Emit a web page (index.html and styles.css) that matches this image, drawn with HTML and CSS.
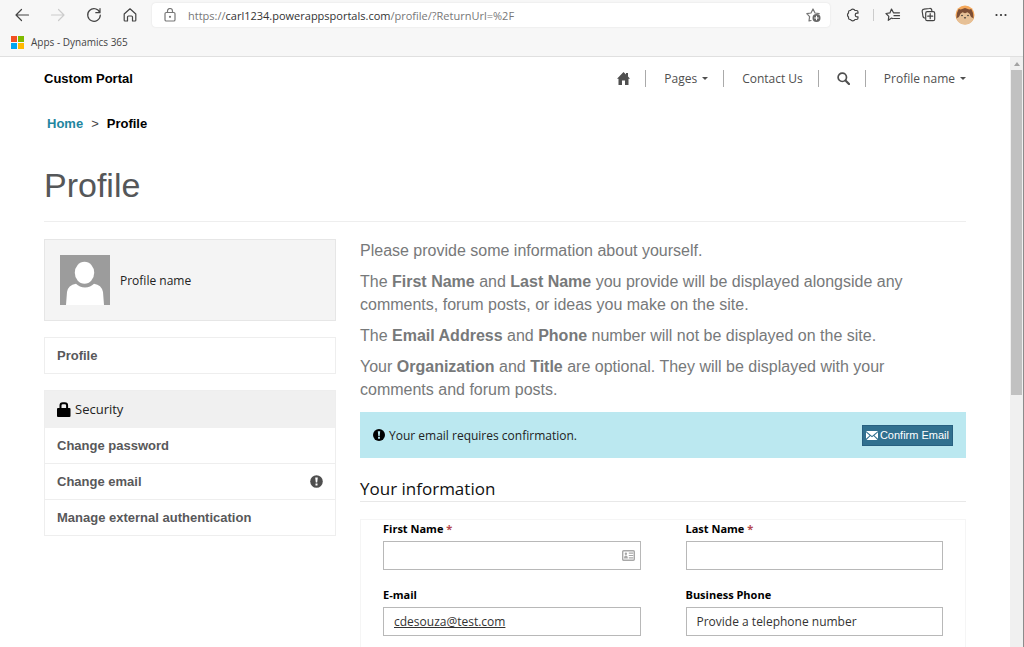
FILE: index.html
```html
<!DOCTYPE html>
<html lang="en">
<head>
<meta charset="utf-8">
<title>Profile - Custom Portal</title>
<link rel="stylesheet" href="styles.css">
</head>
<body>
<header class="browser">
  <div class="toolbar">
    <div class="nav-buttons">
      <button class="tool" aria-label="Back"><svg width="16" height="16" viewBox="0 0 16 16" class="line dark"><path d="M14.500 8H2M7.500 2.500 2 8l5.500 5.500"/></svg></button>
      <button class="tool" aria-label="Forward" disabled><svg width="16" height="16" viewBox="0 0 16 16" class="line faint"><path d="M1.500 8H14M8.500 2.500 14 8l-5.500 5.500"/></svg></button>
      <button class="tool" aria-label="Refresh"><svg width="16" height="16" viewBox="0 0 16 16" class="line dark"><path d="M13.800 5.500A6.300 6.300 0 1 0 14.300 8M14 1.500v4.200H9.800"/></svg></button>
      <button class="tool" aria-label="Home page"><svg width="16" height="16" viewBox="0 0 16 16" class="line dark"><path d="M2.200 7 8 1.800 13.800 7v6.200q0 .8-.8.8H10.500v-4q0-1-1-1h-3q-1 0-1 1v4H3q-.8 0-.8-.8z"/></svg></button>
    </div>
    <div class="address">
      <svg width="12" height="14" viewBox="0 0 12 14" class="line gray"><rect x="1" y="4.500" width="10" height="8.500" rx="1.300"/><path d="M3.500 4.500V3a2.500 2.500 0 0 1 5 0v1.500"/><circle cx="6" cy="8.800" r=".5"/></svg>
      <span class="url"><span class="muted">https://</span>carl1234.powerappsportals.com<span class="muted">/profile/?ReturnUrl=%2F</span></span>
      <button class="tool small" aria-label="Add to favorites"><svg width="16" height="16" viewBox="0 0 16 16"><path class="line gray" d="M5 13.500 3 14l.6-4.300L.8 6.600 5 6l2-4 2 4 4.200.6"/><circle cx="10.500" cy="11" r="4" fill="#666"/><path d="M10.500 8.800v4.400M8.300 11h4.400" stroke="#fff"/></svg></button>
    </div>
    <div class="extras">
      <button class="tool narrow" aria-label="Extensions"><svg width="14" height="14" viewBox="0 0 14 14" class="line dark"><path d="M4.500 2.500a2.500 2.500 0 0 1 4.500 0h1.500q1.500 0 1.500 1.500v1.200H11a1.800 1.800 0 0 0 0 3.600h1V10q0 1.500-1.500 1.500H9a2.500 2.500 0 0 1-4.500 0H4Q2.500 11.500 2.500 10V9a2.500 2.500 0 0 1 0-4V4Q2.500 2.500 4 2.500z"/></svg></button>
      <span class="rule"></span>
      <button class="tool" aria-label="Favorites"><svg width="16" height="16" viewBox="0 0 16 16" class="line dark"><path d="M7.500 11.500 6.600 11 3.300 13.300l.5-4L1 6.500l3.900-.6L6.500 2l2 3.800h6M9 8.700h5.500M8.500 11.500h6"/></svg></button>
      <button class="tool" aria-label="Collections"><svg width="16" height="16" viewBox="0 0 16 16" class="line dark"><path d="M3.500 11A2 2 0 0 1 2 9.500L1.200 4.500A2 2 0 0 1 3 2.200l5.500-.7A2 2 0 0 1 10.800 3v1"/><rect x="4.700" y="4.700" width="9" height="9" rx="1.500"/><path d="M9.200 6.700v5M6.700 9.200h5"/></svg></button>
      <button class="tool" aria-label="Account"><svg width="20" height="20" viewBox="0 0 20 20"><circle cx="10" cy="10" r="9.500" fill="#f5a95c"/><path d="M1.500 13 2 8l1.700-4 2 .5L10 3l4.300 1.500 2-.5L18 8l.5 5-2 3h-13z" fill="#7d4f36"/><path d="M1.500 13q2.800 0 3.700-4L7.500 7.200 10 8.200l2.500-1L14.800 9q.9 4 3.700 4-1.500 6.500-8.500 6.500T1.500 13z" fill="#e6c096"/><circle cx="7" cy="10.500" r=".8" fill="#333"/><circle cx="13" cy="10.500" r=".8" fill="#333"/><path d="M8.800 12.300h2.400L10 14z" fill="#333"/></svg></button>
      <button class="tool" aria-label="Settings and more"><svg width="14" height="4" viewBox="0 0 14 4" fill="#333"><circle cx="2.500" cy="2" r="1.100"/><circle cx="7" cy="2" r="1.100"/><circle cx="11.500" cy="2" r="1.100"/></svg></button>
    </div>
  </div>
  <div class="bookmarks">
    <a href="#" class="bookmark"><svg width="13" height="13" viewBox="0 0 13 13"><path fill="#f25022" d="M0 0h6v6H0z"/><path fill="#7fba00" d="M7 0h6v6H7z"/><path fill="#00a4ef" d="M0 7h6v6H0z"/><path fill="#ffb900" d="M7 7h6v6H7z"/></svg>Apps - Dynamics 365</a>
  </div>
</header>
<div class="window">
  <div class="page">
    <div class="site-header">
      <a href="#" class="brand">Custom Portal</a>
      <nav class="site-nav">
        <a href="#" aria-label="Home"><svg width="13" height="13" viewBox="0 0 13 13" fill="#4f4f4f"><path d="M6.500 0 9 2.500V1h2v3.500L13 6.800H11.500V13H8V8.500H5V13H1.500V6.800H0z"/></svg></a>
        <a href="#">Pages <i class="caret"></i></a>
        <a href="#">Contact Us</a>
        <a href="#" aria-label="Search"><svg width="13" height="13" viewBox="0 0 13 13" fill="none" stroke="#4f4f4f"><circle cx="5.300" cy="5.300" r="4.200" stroke-width="1.700"/><path d="m8.500 8.500 3.500 3.500" stroke-width="2.200" stroke-linecap="round"/></svg></a>
        <a href="#">Profile name <i class="caret"></i></a>
      </nav>
    </div>
    <nav class="crumbs"><a href="#">Home</a><span class="sep">&gt;</span><b>Profile</b></nav>
    <h1>Profile</h1>
    <div class="columns">
      <aside class="sidebar">
        <div class="card">
          <svg width="50" height="50" viewBox="0 0 50 50"><path fill="#9c9c9c" d="M0 0h50v50H0z"/><ellipse cx="24.500" cy="17.700" rx="9.700" ry="11" fill="#fff"/><path fill="#fff" d="M6 50 7 37q1-7 9-8.300 3.500 3.700 9 3.700t9-3.700q7.500 1 9 8.300l1 13z"/></svg>
          <span>Profile name</span>
        </div>
        <div class="list"><a href="#" class="item">Profile</a></div>
        <div class="list">
          <h2 class="list-title"><svg width="14" height="15" viewBox="0 0 14 15"><rect y="6" width="13.500" height="9" rx="1"/><path d="M3.500 7V3.500q0-2.300 2.300-2.300h2q2.300 0 2.300 2.300V7" fill="none" stroke="#000" stroke-width="2"/></svg>Security</h2>
          <a href="#" class="item">Change password</a>
          <a href="#" class="item">Change email<svg width="13" height="13" viewBox="0 0 13 13"><circle cx="6.500" cy="6.500" r="6.300" fill="#4f4f4f"/><path d="M5.200 2.500h2.600l-.6 5H5.800zM5.500 8.500h2v2h-2z" fill="#fff"/></svg></a>
          <a href="#" class="item">Manage external authentication</a>
        </div>
      </aside>
      <main class="main">
        <div class="intro">
          <p>Please provide some information about yourself.</p>
          <p>The <b>First Name</b> and <b>Last Name</b> you provide will be displayed alongside any comments, forum posts, or ideas you make on the site.</p>
          <p>The <b>Email Address</b> and <b>Phone</b> number will not be displayed on the site.</p>
          <p>Your <b>Organization</b> and <b>Title</b> are optional. They will be displayed with your comments and forum posts.</p>
        </div>
        <div class="alert">
          <svg width="12" height="12" viewBox="0 0 13 13"><circle cx="6.500" cy="6.500" r="6.500"/><path d="M5.200 2.500h2.600l-.6 5H5.800zM5.500 8.500h2v2h-2z" fill="#bce8f1"/></svg>
          <span>Your email requires confirmation.</span>
          <button class="confirm"><svg width="12" height="9" viewBox="0 0 12 9" fill="#fff"><path d="M0 0h12L6 5zM0 1.300 3.600 4.400 0 7.800zM12 1.300v6.500L8.400 4.400zM.5 9l3.900-4L6 6.300 7.600 5l3.900 4z"/></svg>Confirm Email</button>
        </div>
        <h2 class="section-title">Your information</h2>
        <form class="form">
          <div class="field">
            <label for="first">First Name <span class="req">*</span></label>
            <div class="control"><input id="first" type="text"><svg width="13" height="11" viewBox="0 0 13 11"><rect x=".7" y=".7" width="11.600" height="9.600" rx="1" fill="#fff" stroke="#a8a8a8" stroke-width="1.400"/><path d="M6.800 3.200h4.500M6.800 5.500h4.500M6.800 7.800h4.500" stroke="#a8a8a8" stroke-width="1.200"/><circle cx="3.900" cy="3.700" r="1.200" fill="#a8a8a8"/><path d="M2 8.500q0-3 1.900-3t1.900 3z" fill="#a8a8a8"/></svg></div>
          </div>
          <div class="field">
            <label for="last">Last Name <span class="req">*</span></label>
            <div class="control"><input id="last" type="text"></div>
          </div>
          <div class="field">
            <label for="email">E-mail</label>
            <div class="control"><input id="email" type="email" class="linked" value="cdesouza@test.com"></div>
          </div>
          <div class="field">
            <label for="phone">Business Phone</label>
            <div class="control"><input id="phone" type="tel" placeholder="Provide a telephone number"></div>
          </div>
        </form>
      </main>
    </div>
  </div>
  <div class="scrollbar" aria-hidden="true"><i class="up"></i><i class="thumb"></i></div>
</div>
</body>
</html>
```
FILE: styles.css
```css
* { box-sizing: border-box; }
body {
  margin: 0;
  height: 100vh;
  display: flex;
  flex-direction: column;
  overflow: hidden;
  border-right: 1px solid #8c8c8c;
  background: #fff;
  color: #222;
  font-family: "Open Sans", "Noto Sans", sans-serif;
  font-size: 12px;
}
a { color: inherit; text-decoration: none; }
svg { display: block; flex: none; }
h1, h2, p { margin: 0; font-weight: 400; }

.browser { flex: none; background: #f7f7f7; border-bottom: 1px solid #e0e0e0; }
.toolbar { display: flex; align-items: center; height: 30px; padding: 0 4px; }
.nav-buttons, .extras { display: flex; align-items: center; }
.tool {
  display: flex;
  align-items: center;
  justify-content: center;
  width: 36px;
  height: 28px;
  padding: 0;
  border: 0;
  background: none;
}
.tool.narrow { width: 38px; }
.tool.small { width: 24px; height: 22px; }
.line { fill: none; stroke-width: 1.2; stroke-linecap: round; stroke-linejoin: round; }
.dark { stroke: #444; }
.gray { stroke: #777; }
.faint { stroke: #ccc; }
.address {
  flex: 1;
  display: flex;
  align-items: center;
  height: 24px;
  margin-left: 4px;
  padding: 0 4px 0 12px;
  border-radius: 4px;
  background: #fff;
  box-shadow: 0 0 2px #ddd;
}
.url { flex: 1; padding-left: 12px; font-size: 11px; color: #333; }
.muted { color: #777; }
.extras { padding-left: 4px; }
.rule { width: 1px; height: 12px; margin: 0 1px; background: #ccc; }
.bookmarks { height: 26px; padding: 4px 11px; }
.bookmark { display: inline-flex; align-items: center; gap: 7px; font-size: 10px; line-height: 16px; color: #444; }

.window { flex: 1; min-height: 0; display: flex; }
.page { flex: 1; min-width: 0; padding: 0 44px; overflow: hidden; }
.scrollbar { width: 13px; display: flex; flex-direction: column; align-items: center; background: #f0f0f0; }
.up { margin: 5px 0 4px; border: 3px solid transparent; border-top: 0; border-bottom: 4px solid #a3a3a3; }
.thumb { width: 11px; height: 55%; background: #c1c1c1; }

.site-header { display: flex; justify-content: space-between; align-items: center; height: 42px; }
.brand { font: bold 13px "Liberation Sans", sans-serif; color: #000; }
.site-nav { display: flex; color: #4f4f4f; font-weight: 500; }
.site-nav a { display: flex; align-items: center; gap: 5px; height: 17px; padding: 0 15px 0 18px; }
.site-nav a:last-child { padding-right: 0; }
.site-nav a + a { border-left: 1px solid #aaa; }
.caret { border: 3px solid transparent; border-top-color: #4f4f4f; border-bottom: 0; }

.crumbs { display: flex; gap: 8px; padding: 16px 3px; font: bold 13px/18px "Liberation Sans", sans-serif; color: #000; }
.crumbs a { color: #1f86a0; }
.sep { font-weight: 400; color: #444; }
h1 {
  padding: 15px 0 15px;
  border-bottom: 1px solid #eee;
  font: 34px/42px "Liberation Sans", sans-serif;
  color: #555759;
}

.columns { display: grid; grid-template-columns: 292fr 606fr; gap: 24px; padding-top: 17px; }
.sidebar { display: flex; flex-direction: column; gap: 16px; }
.card {
  display: flex;
  align-items: center;
  gap: 10px;
  padding: 15px;
  border: 1px solid #e6e6e6;
  background: #f4f4f4;
}
.list { border: 1px solid #eee; }
.item {
  display: flex;
  justify-content: space-between;
  align-items: center;
  padding: 0 12px;
  font: bold 13px/35px "Liberation Sans", sans-serif;
  color: #58585a;
}
.item + .item { border-top: 1px solid #eee; }
.list-title { display: flex; align-items: center; gap: 4px; padding: 0 12px; background: #f0f0f0; font-size: 13px; line-height: 37px; }

.intro { padding-right: 20px; font: 16px/23px "Liberation Sans", sans-serif; color: #77797a; }
.intro p { margin-bottom: 8px; }
.alert {
  display: flex;
  align-items: center;
  gap: 4px;
  margin-top: 11px;
  padding: 0 13px;
  height: 46px;
  background: #bbe8f0;
}
.confirm {
  display: flex;
  align-items: center;
  gap: 2px;
  height: 21px;
  margin-left: auto;
  padding: 0 3px;
  border: 1px solid #286080;
  background: #31708f;
  color: #fff;
  font: 11px "Liberation Sans", sans-serif;
}
.section-title { margin-top: 19px; border-bottom: 1px solid #e8e8e8; font-size: 17px; line-height: 24px; color: #111; }
.form {
  display: grid;
  grid-template-columns: 1fr 1fr;
  gap: 16px 45px;
  margin-top: 17px;
  padding: 0 22px 30px;
  border: 1px solid #f5f5f5;
}
.field label { display: block; font-size: 11px; font-weight: 700; line-height: 18px; margin-bottom: 3px; color: #000; }
.req { color: #b5484c; }
.control { position: relative; }
.control input {
  display: block;
  width: 100%;
  height: 29px;
  padding: 0 10px;
  border: 1px solid #b8b8b8;
  border-radius: 0;
  background: #fff;
  color: #333;
  font: inherit;
}
.control input::placeholder { color: #333; opacity: 1; }
.control .linked { text-decoration: underline; }
.control svg { position: absolute; right: 6px; top: 9px; }
```
